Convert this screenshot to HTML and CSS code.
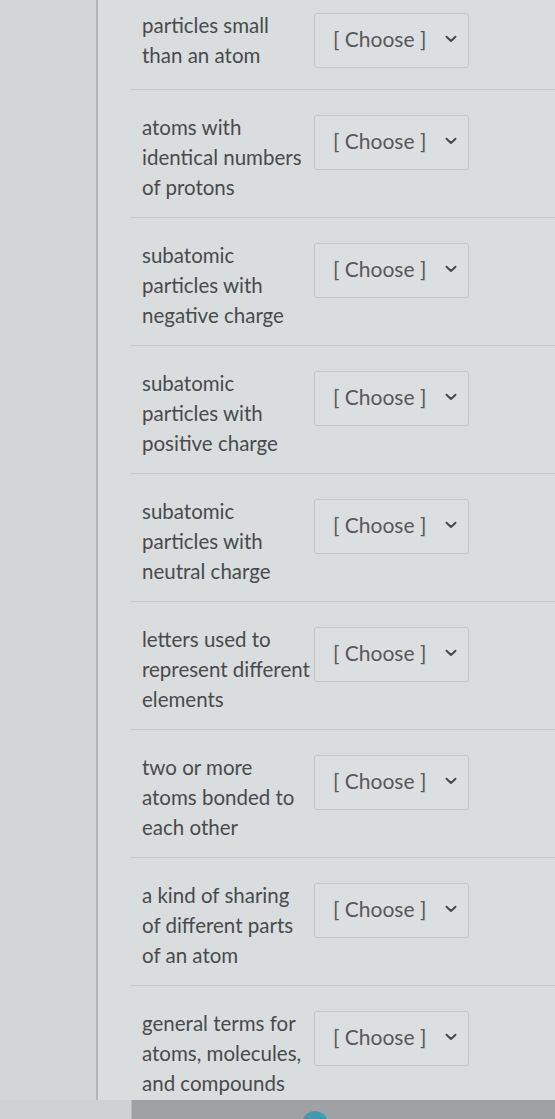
FILE: index.html
```html
<!DOCTYPE html>
<html lang="en">
<head>
<meta charset="utf-8">
<title>Matching</title>
<link rel="stylesheet" href="styles.css">
</head>
<body>
<div class="screen">
  <div class="page">
    <aside class="side"></aside>
    <main class="main">
      <div class="row">
        <div class="term">particles small<br>than an atom</div>
        <div class="select"><span>[ Choose ]</span><svg class="chev" viewBox="0 0 12 8" width="12" height="8"><path d="M1.5 1.8 L6 6 L10.5 1.8" fill="none" stroke="#44484a" stroke-width="2" stroke-linecap="round" stroke-linejoin="round"/></svg></div>
      </div>
      <div class="row">
        <div class="term">atoms with<br>identical numbers<br>of protons</div>
        <div class="select"><span>[ Choose ]</span><svg class="chev" viewBox="0 0 12 8" width="12" height="8"><path d="M1.5 1.8 L6 6 L10.5 1.8" fill="none" stroke="#44484a" stroke-width="2" stroke-linecap="round" stroke-linejoin="round"/></svg></div>
      </div>
      <div class="row">
        <div class="term">subatomic<br>particles with<br>negative charge</div>
        <div class="select"><span>[ Choose ]</span><svg class="chev" viewBox="0 0 12 8" width="12" height="8"><path d="M1.5 1.8 L6 6 L10.5 1.8" fill="none" stroke="#44484a" stroke-width="2" stroke-linecap="round" stroke-linejoin="round"/></svg></div>
      </div>
      <div class="row">
        <div class="term">subatomic<br>particles with<br>positive charge</div>
        <div class="select"><span>[ Choose ]</span><svg class="chev" viewBox="0 0 12 8" width="12" height="8"><path d="M1.5 1.8 L6 6 L10.5 1.8" fill="none" stroke="#44484a" stroke-width="2" stroke-linecap="round" stroke-linejoin="round"/></svg></div>
      </div>
      <div class="row">
        <div class="term">subatomic<br>particles with<br>neutral charge</div>
        <div class="select"><span>[ Choose ]</span><svg class="chev" viewBox="0 0 12 8" width="12" height="8"><path d="M1.5 1.8 L6 6 L10.5 1.8" fill="none" stroke="#44484a" stroke-width="2" stroke-linecap="round" stroke-linejoin="round"/></svg></div>
      </div>
      <div class="row">
        <div class="term">letters used to<br>represent different<br>elements</div>
        <div class="select"><span>[ Choose ]</span><svg class="chev" viewBox="0 0 12 8" width="12" height="8"><path d="M1.5 1.8 L6 6 L10.5 1.8" fill="none" stroke="#44484a" stroke-width="2" stroke-linecap="round" stroke-linejoin="round"/></svg></div>
      </div>
      <div class="row">
        <div class="term">two or more<br>atoms bonded to<br>each other</div>
        <div class="select"><span>[ Choose ]</span><svg class="chev" viewBox="0 0 12 8" width="12" height="8"><path d="M1.5 1.8 L6 6 L10.5 1.8" fill="none" stroke="#44484a" stroke-width="2" stroke-linecap="round" stroke-linejoin="round"/></svg></div>
      </div>
      <div class="row">
        <div class="term">a kind of sharing<br>of different parts<br>of an atom</div>
        <div class="select"><span>[ Choose ]</span><svg class="chev" viewBox="0 0 12 8" width="12" height="8"><path d="M1.5 1.8 L6 6 L10.5 1.8" fill="none" stroke="#44484a" stroke-width="2" stroke-linecap="round" stroke-linejoin="round"/></svg></div>
      </div>
      <div class="row">
        <div class="term">general terms for<br>atoms, molecules,<br>and compounds</div>
        <div class="select"><span>[ Choose ]</span><svg class="chev" viewBox="0 0 12 8" width="12" height="8"><path d="M1.5 1.8 L6 6 L10.5 1.8" fill="none" stroke="#44484a" stroke-width="2" stroke-linecap="round" stroke-linejoin="round"/></svg></div>
      </div>
    </main>
  </div>
  <footer class="taskbar">
    <div class="task-start"></div>
    <div class="task-icons"><span class="task-dot"></span></div>
  </footer>
</div>
</body>
</html>
```
FILE: styles.css
```css
* { box-sizing: border-box; }
html, body { margin: 0; padding: 0; }
body {
  width: 555px;
  height: 1119px;
  overflow: hidden;
  background: #d6d9da;
  font-family: Lato, "Open Sans", sans-serif;
}
.screen {
  display: flex;
  flex-direction: column;
  height: 1119px;
}
.page {
  display: flex;
  height: 1100px;
  overflow: hidden;
}
.side {
  width: 98px;
  flex: none;
  background: #d3d6d7;
  border-right: 2px solid #b3b6b7;
}
.main {
  flex: 1;
  background: #dadddd;
  padding-left: 32px;
}
.row {
  display: flex;
  align-items: flex-start;
  padding: 22px 0 15px 12px;
  border-bottom: 1px solid #c6c9ca;
}
.row:first-child {
  padding-top: 10px;
  padding-bottom: 19px;
}
.term {
  width: 172px;
  flex: none;
  font-size: 20.5px;
  line-height: 30px;
  color: #484b4d;
  white-space: nowrap;
}
.select {
  width: 155px;
  height: 55px;
  margin-top: 3px;
  display: flex;
  align-items: center;
  justify-content: space-between;
  padding: 0 11px 4px 18px;
  border: 1px solid #c4c7c8;
  border-radius: 3px;
  background: #dcdfe0;
  font-size: 21px;
  color: #55595b;
}
.chev { flex: none; }
.taskbar {
  display: flex;
  height: 19px;
  background: #9ea2a5;
}
.task-start {
  width: 132px;
  background: #cfd2d3;
  border-right: 1px solid #b6b9ba;
}
.task-icons {
  flex: 1;
  display: flex;
  padding-left: 170px;
  padding-top: 11px;
}
.task-dot {
  width: 26px;
  height: 26px;
  border-radius: 50%;
  background: #3f9bb0;
}
```
